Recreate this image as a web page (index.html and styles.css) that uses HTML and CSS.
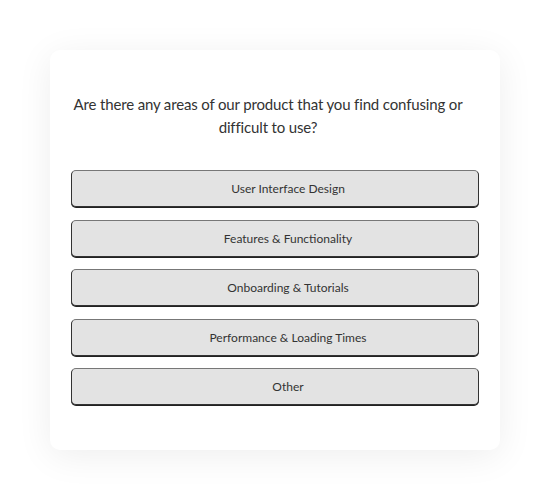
FILE: index.html
```html
<!DOCTYPE html>
<html lang="en">
<head>
    <meta charset="UTF-8">
    <meta name="viewport" content="width=device-width, initial-scale=1.0">
    <title>Survey</title>
    <link rel="stylesheet" href="styles.css">
</head>
<body>
    <div class="survey">
        <div class="question">Are there any areas of our product that you find confusing or difficult to use?</div>

        <div class="options">
            <button class="option">User Interface Design</button>
            <button class="option">Features &amp; Functionality</button>
            <button class="option">Onboarding &amp; Tutorials</button>
            <button class="option">Performance &amp; Loading Times</button>
            <button class="option">Other</button>
        </div>
    </div>
</body>
</html>
```

FILE: styles.css
```css
* {
    margin: 0;
    padding: 0;
    box-sizing: border-box;
}

body {
    font-family: 'Lato', 'Open Sans', sans-serif;
    background: #fff;
    min-height: 100vh;
    padding: 50px;
}

.survey {
    background: #fff;
    border-radius: 10px;
    box-shadow: 0 6px 36px rgba(0, 0, 0, 0.07);
    width: 450px;
    height: 400px;
    padding: 43px 21px 0;
}

.question {
    color: #333;
    font-size: 15px;
    letter-spacing: -0.15px;
    line-height: 23px;
    text-align: center;
    padding-right: 14px;
    margin-bottom: 31px;
}

.options {
    display: flex;
    flex-direction: column;
    gap: 12.5px;
}

.option {
    height: 37px;
    width: 100%;
    padding-left: 26px;
    background: #e3e3e3;
    border: 1px solid #333;
    border-top-color: #777;
    border-radius: 5px;
    box-shadow: 0 1px 0 #222;
    font-family: inherit;
    font-size: 12px;
    color: #333;
    cursor: pointer;
}

.option:hover {
    background: #d8d8d8;
}
```
